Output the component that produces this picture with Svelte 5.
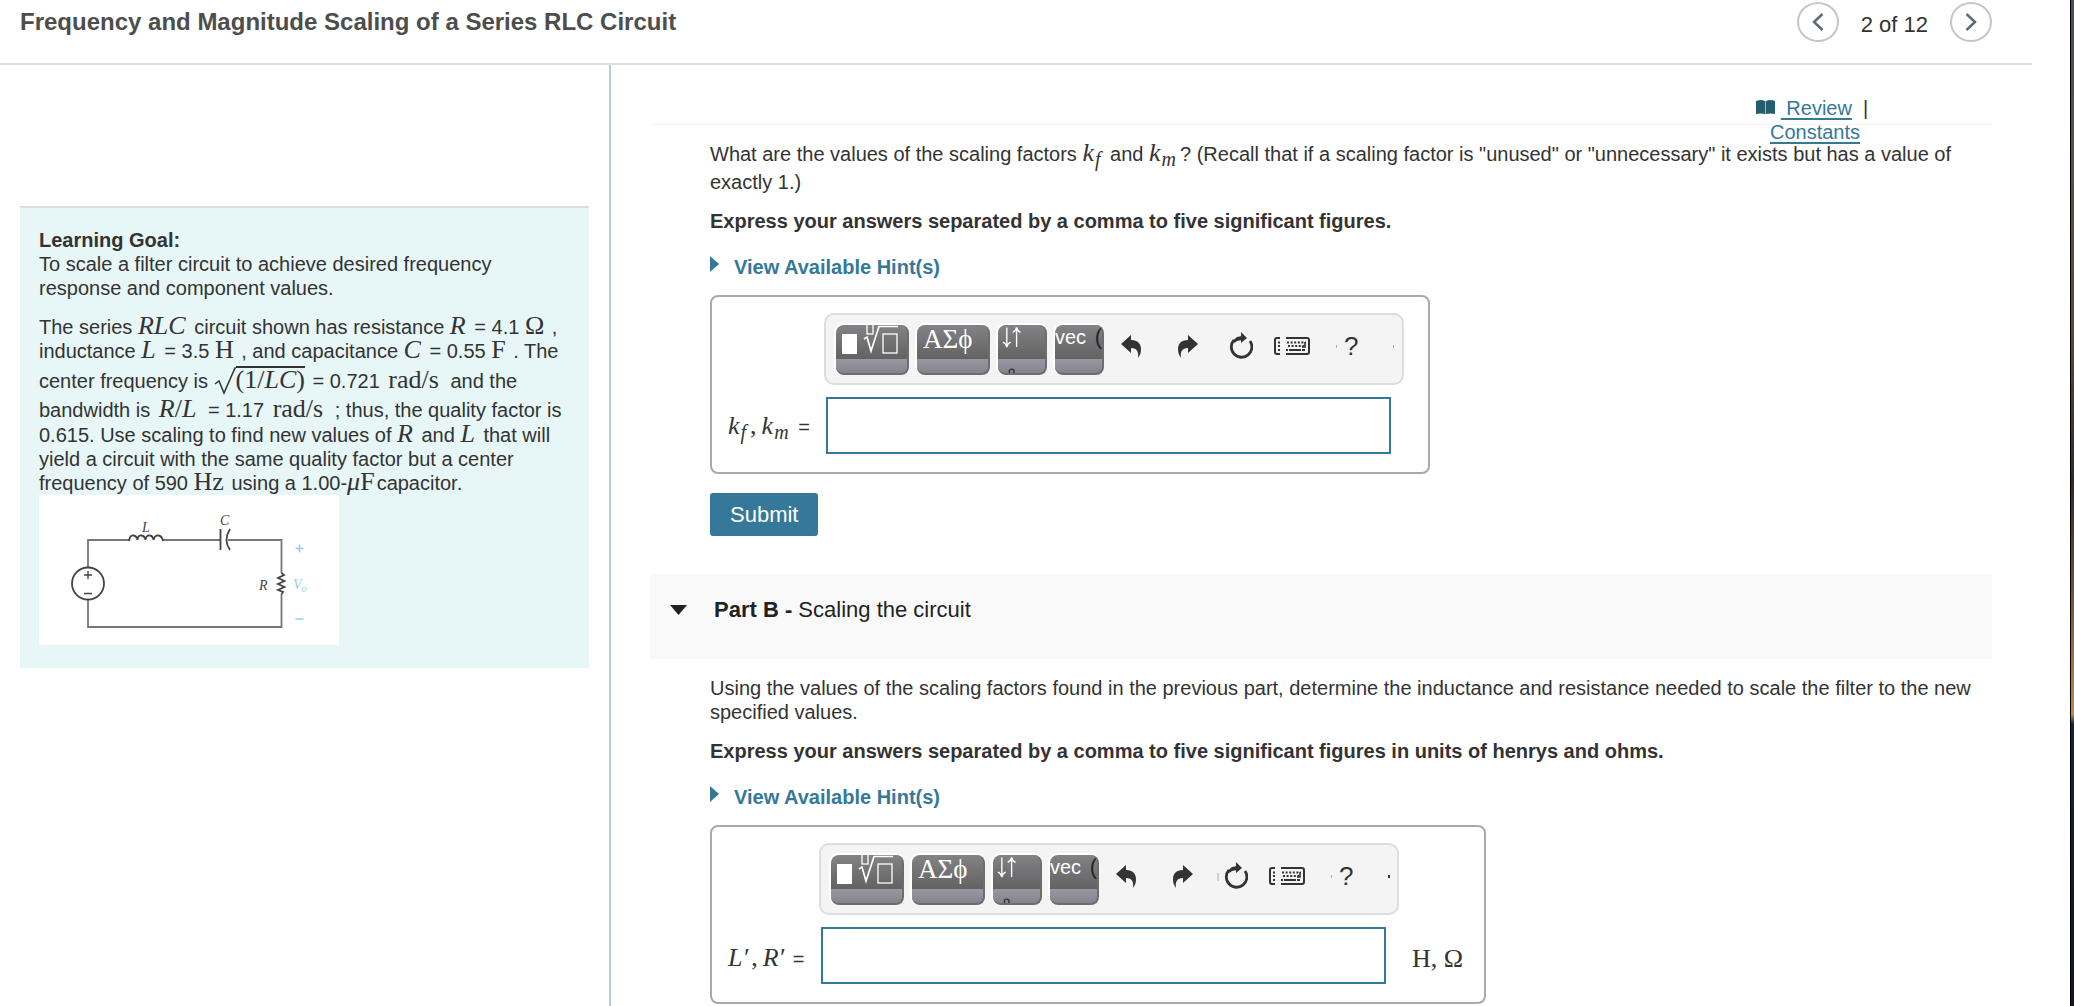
<script lang="ts">
	type Part = {
		id: string;
		unit: string;
		ticks: boolean;
	};

	const partA: Part = { id: 'part-a', unit: '', ticks: false };
	const partB: Part = { id: 'part-b', unit: 'H, Ω', ticks: true };

	let answers = $state<Record<string, string>>({ 'part-a': '', 'part-b': '' });
	let partBOpen = $state(true);
</script>

{#snippet hints()}
	<button type="button" class="hints">
		<svg width="10" height="18" viewBox="0 0 10 18" aria-hidden="true">
			<path d="M0 1 L9 9 L0 17 Z" fill="#357899" />
		</svg>
		View Available Hint(s)
	</button>
{/snippet}

{#snippet toolbar(ticks: boolean)}
	<div class="toolbar" role="toolbar" aria-label="Equation tools">
		<button type="button" class="tool wide" aria-label="Templates">
			<svg width="71" height="33" viewBox="0 0 71 33" fill="none" stroke="#fff">
				<rect x="6" y="9" width="15" height="20" fill="#fff" stroke="none" />
				<rect x="31" y="-4" width="6" height="13" stroke-width="1.3" />
				<path d="M28 14 L31 12 L35 26 L43 1.5 H62" stroke-width="1.7" />
				<rect x="47" y="9" width="14" height="19" stroke-width="1.3" />
			</svg>
		</button>
		<button type="button" class="tool wide greek">ΑΣϕ</button>
		<button type="button" class="tool narrow" aria-label="Arrows">
			<svg width="48" height="48" viewBox="0 0 48 48" fill="none" stroke="#fff" stroke-width="1.4">
				<path d="M9 2 V22 M5 17 Q8 18 9 22 Q10 18 13 17" />
				<path d="M19 22 V2 M15 7 Q18 6 19 2 Q20 6 23 7" />
				<circle cx="14" cy="47" r="2.5" stroke="#333" />
			</svg>
		</button>
		<button type="button" class="tool narrow vec">vec&nbsp;<span>(</span></button>
		<div class="actions">
			<button type="button" class="action" aria-label="Undo">
				<svg width="20" height="23" viewBox="0 0 20 23">
					<path d="M0 9 L10 0 V5 C17 5 20 9 20 14 C20 18 19 20 17 23 C18 17 16 13 10 13 V18 Z" fill="#333" />
				</svg>
			</button>
			<button type="button" class="action" aria-label="Redo">
				<svg width="20" height="23" viewBox="0 0 20 23">
					<path d="M20 9 L10 0 V5 C3 5 0 9 0 14 C0 18 1 20 3 23 C2 17 4 13 10 13 V18 Z" fill="#333" />
				</svg>
			</button>
			<button type="button" class="action reset" aria-label="Reset">
				<svg width="34" height="28" viewBox="-10 0 34 28">
					{#if ticks}<path d="M-6 11 V19" stroke="#aaa" />{/if}
					<path d="M5 8 A10.3 10.3 0 1 0 21 9" fill="none" stroke="#333" stroke-width="2.8" />
					<path d="M12 0 L18 6 L12 11 Z M4.500 8 L8 5 L13 4 V8 L8 9 L5.500 11 Z" fill="#333" />
				</svg>
			</button>
			<button type="button" class="action" aria-label="Keyboard shortcuts">
				<svg width="36" height="18" viewBox="0 0 36 18" fill="none" stroke="#333">
					<path d="M6 1 H3 Q1 1 1 3 V15 Q1 17 3 17 H6" stroke-width="2" />
					<path d="M12 1 H33 Q35 1 35 3 V15 Q35 17 33 17 H12" stroke-width="2" />
					<path d="M4 5.5 H6 M4 9 H6 M4 13 H6 M12 13 H14 M28 13 H31" stroke-width="2" />
					<path d="M13 5.5 H32 M14 9 H30" stroke-width="2" stroke-dasharray="2 1.6" />
					<path d="M15 13 H27" stroke-width="2" />
					<path d="M31 5 V10 H28" stroke-width="1.6" />
				</svg>
			</button>
			<button type="button" class="action help"><span class="tick"></span>?</button>
			<span class="tick" class:dark={ticks}></span>
		</div>
	</div>
{/snippet}

{#snippet answerBox(part: Part)}
	<div class="answer" class:with-unit={part.unit}>
		<div class="answer-grid">
			{@render toolbar(part.ticks)}
			<label for={part.id}>
				{#if part.id === 'part-a'}
					<i class="math">k<sub>f</sub></i><span class="math">,</span><i class="math">k<sub>m</sub></i>
				{:else}
					<i class="math">L′</i><span class="math">,</span><i class="math">R′</i>
				{/if}
				<span>=</span>
			</label>
			<input id={part.id} type="text" autocomplete="off" bind:value={answers[part.id]} />
			{#if part.unit}
				<span class="unit math">{part.unit}</span>
			{/if}
		</div>
	</div>
{/snippet}

<div class="window">
	<div class="page">
		<header>
			<h1>Frequency and Magnitude Scaling of a Series RLC Circuit</h1>
			<nav aria-label="Items">
				<button type="button" class="round" aria-label="Previous item">
					<svg width="12" height="18" viewBox="0 0 12 18"><path d="M10.5 1 L2 9 L10.5 17" /></svg>
				</button>
				<span>2 of 12</span>
				<button type="button" class="round" aria-label="Next item">
					<svg width="12" height="18" viewBox="0 0 12 18"><path d="M1.5 1 L10 9 L1.5 17" /></svg>
				</button>
			</nav>
		</header>

		<div class="columns">
			<aside>
				<section class="goal">
					<p>
						<strong>Learning Goal:</strong><br />
						To scale a filter circuit to achieve desired frequency response and component values.
					</p>
					<p>
						The series <i class="math">RLC</i> circuit shown has resistance <i class="math">R</i> = 4.1
						<span class="math">Ω</span> ,<br />
						inductance <i class="math">L</i> = 3.5 <span class="math">H</span> , and capacitance
						<i class="math">C</i> = 0.55 <span class="math">F</span> . The<br />
						center frequency is
						<span class="math tall"
							><svg width="22" height="28" viewBox="0 0 22 28" aria-hidden="true">
								<path d="M1 17 L5 14 L10 26 L21 1 H22" fill="none" stroke="#333" stroke-width="1.5" />
							</svg><span class="radicand">(1/<i>LC</i>)</span></span
						>
						= 0.721 <span class="math rate">rad/s</span> and the<br />
						bandwidth is <span class="math tall rate"><i>R</i>/<i>L</i></span> = 1.17
						<span class="math rate">rad/s</span> ; thus, the quality factor is<br />
						0.615. Use scaling to find new values of <i class="math">R</i> and <i class="math">L</i> that will<br />
						yield a circuit with the same quality factor but a center<br />
						frequency of 590 <span class="math">Hz</span> using a 1.00-<span class="math"><i>μ</i>F</span>capacitor.
					</p>
					<svg class="circuit" width="300" height="150" viewBox="0 0 300 150" role="img" aria-label="Series RLC circuit">
						<rect width="300" height="150" fill="#fff" />
						<g fill="none" stroke="#777" stroke-width="1.8">
							<path d="M49 73 V45 H90 M124 45 H181 M189 45 H242.500 V78" />
							<path d="M49 105 V132 H242.500 V99" />
						</g>
						<g fill="none" stroke="#444" stroke-width="1.8">
							<circle cx="49" cy="88.500" r="16" />
							<path d="M90 46 Q91 40 94.500 40.500 Q98 41 98.500 45 Q99 40 102.500 40.500 Q106 41 106.500 45 Q107 40 111 40.500 Q114 41 114.500 45 Q116 40 119.500 40.500 Q123 41 124 46" />
							<path d="M181.500 34 V55 M191 34 Q184 45 191 55" />
							<path d="M242.500 78 L245 80 L239 83 L245.500 86 L239 89 L245.500 92 L239 95 L244 97 L242.500 99" />
							<path d="M45 80 H53 M49 76 V84 M45 98.500 H53" stroke-width="1.4" />
						</g>
						<g class="circuit-text" fill="#444">
							<text x="103" y="37">L</text>
							<text x="181" y="30">C</text>
							<text x="220" y="95">R</text>
							<text x="254" y="94" fill="#8fd0e8">V<tspan font-size="10" dy="3">o</tspan></text>
						</g>
						<path d="M256.500 53.500 H264.500 M260.500 49.500 V57.500 M256.500 124 H264.500" fill="none" stroke="#8fd0e8" stroke-width="1.5" />
					</svg>
				</section>
			</aside>

			<main>
				<div class="review">
					<div class="review-links">
						<svg width="19" height="15" viewBox="0 0 19 15" aria-hidden="true">
							<path d="M0 1 Q5 -1 9 1 V14 Q5 13 0 14 Z M19 1 Q14 -1 10 1 V14 Q14 13 19 14 Z" fill="#265c70" />
							<path d="M9.500 1 V14" stroke="#9fbac4" />
						</svg>
						<a href="#review">&nbsp;Review</a>&nbsp; |&nbsp;<br />
						<a href="#constants">Constants</a>
					</div>
				</div>

				<section class="part">
					<p>
						What are the values of the scaling factors <i class="math">k<sub>f</sub></i> and
						<i class="math">k<sub>m</sub></i>? (Recall that if a scaling factor is "unused" or
						"unnecessary" it exists but has a value of exactly 1.)
					</p>
					<p><strong>Express your answers separated by a comma to five significant figures.</strong></p>
					{@render hints()}
					{@render answerBox(partA)}
					<button type="button" class="submit">Submit</button>
				</section>

				<h2>
					<button type="button" aria-expanded={partBOpen} onclick={() => (partBOpen = !partBOpen)}>
						<svg width="17" height="10" viewBox="0 0 17 10" aria-hidden="true">
							<path d="M0 0 H17 L8.500 10 Z" fill="#222" />
						</svg>
						<span><strong>Part B -</strong> Scaling the circuit</span>
					</button>
				</h2>

				{#if partBOpen}
					<section class="part">
						<p>
							Using the values of the scaling factors found in the previous part, determine the
							inductance and resistance needed to scale the filter to the new specified values.
						</p>
						<p>
							<strong>
								Express your answers separated by a comma to five significant figures in units of
								henrys and ohms.
							</strong>
						</p>
						{@render hints()}
						{@render answerBox(partB)}
					</section>
				{/if}
			</main>
		</div>
	</div>
	<!-- sliver of the desktop behind the window -->
	<div class="desktop"></div>
</div>

<style>
	:global(body) {
		margin: 0;
		background: #fff;
	}

	.window {
		display: flex;
		min-height: 100vh;
		font-family: 'Liberation Sans', Arial, sans-serif;
		font-size: 20px;
		line-height: 24px;
		color: #333;
	}

	.desktop {
		width: 3px;
		border-left: 1px solid #000;
		background: linear-gradient(
			#43505e,
			#5a5048 15%,
			#5c4836 33%,
			#2f2b28 48%,
			#6e4e32 58%,
			#bd8850 71%,
			#10243a 72%,
			#0c1826
		);
	}

	.page {
		flex: 1;
		display: flex;
		flex-direction: column;
	}

	button {
		font: inherit;
		color: inherit;
		border: none;
		background: none;
		padding: 0;
		cursor: pointer;
	}

	p {
		margin: 0;
	}

	/* zero line height keeps the larger serif from stretching its line */
	.math {
		padding-right: 2px;
		font-family: 'Liberation Serif', 'Times New Roman', serif;
		font-size: 26px;
		line-height: 0;
	}

	i.math {
		padding-right: 3px;
	}

	.math sub {
		padding: 0 1px;
		font-size: 20px;
		line-height: 22px;
		vertical-align: -5px;
	}

	/* header */

	header {
		display: flex;
		justify-content: space-between;
		align-items: flex-start;
		height: 63px;
		margin-right: 38px;
		padding-left: 20px;
		border-bottom: 2px solid #ddd;
	}

	h1 {
		margin: 8px 0 0;
		font-size: 24px;
		line-height: 28px;
		color: #4d4d4d;
	}

	nav {
		display: flex;
		align-items: center;
		gap: 22px;
		padding: 2px 40px 0 0;
		font-size: 22px;
	}

	nav span {
		padding-top: 6px;
	}

	.round {
		display: flex;
		align-items: center;
		justify-content: center;
		width: 42px;
		height: 40px;
		border: 2px solid #c6c6c6;
		border-radius: 50%;
		box-sizing: border-box;
	}

	.round path {
		fill: none;
		stroke: #5f6b70;
		stroke-width: 2.5;
	}

	.columns {
		flex: 1;
		display: flex;
	}

	/* left column */

	aside {
		flex: none;
		width: 611px;
		padding: 141px 20px 0;
		border-right: 2px solid #b8cadc;
		box-sizing: border-box;
	}

	.goal {
		padding: 20px 0 23px 19px;
		border-top: 2px solid #ddd;
		background: #e7f6f6;
	}

	.goal p:first-child {
		width: 500px;
		margin-bottom: 15px;
	}

	.tall {
		display: inline-block;
		padding-top: 3px;
		padding-bottom: 2px;
		line-height: 24px;
	}

	.rate {
		padding-left: 3px;
		padding-right: 6px;
	}

	.tall svg {
		margin: -8px 0 -7px;
	}

	.radicand {
		display: inline-block;
		border-top: 2px solid #333;
	}

	.circuit {
		display: block;
	}

	.circuit-text {
		font: italic 14px 'Liberation Serif', serif;
	}

	/* right column */

	main {
		flex: 1;
		min-width: 0;
		padding: 0 78px 0 39px;
	}

	.review {
		display: flex;
		justify-content: flex-end;
		height: 59px;
		border-bottom: 1px solid #f2f2f2;
	}

	.review-links {
		width: 130px;
		padding: 31px 112px 0 0;
		text-align: center;
	}

	.review a {
		color: #357899;
		text-underline-offset: 3px;
		text-decoration-thickness: 2px;
	}

	.part {
		padding: 17px 0 0 60px;
	}

	.part p {
		margin-bottom: 15px;
	}

	.hints {
		display: flex;
		gap: 14px;
		margin-top: 22px;
		color: #357899;
		font-weight: bold;
	}

	.answer {
		width: 720px;
		margin-top: 16px;
		padding: 16px 22px 18px 16px;
		border: 2px solid #aaa;
		border-radius: 8px;
		box-sizing: border-box;
	}

	.answer.with-unit {
		width: 776px;
	}

	.answer-grid {
		display: grid;
		grid-template-columns: 96px 580px;
		row-gap: 12px;
		align-items: center;
	}

	.with-unit .answer-grid {
		grid-template-columns: 91px 580px auto;
	}

	.toolbar {
		grid-column: 2;
		display: flex;
		gap: 8px;
		height: 72px;
		padding: 10px;
		border: 2px solid #ddd;
		border-radius: 10px;
		box-sizing: border-box;
		background: #f4f4f4;
	}

	.tool {
		flex: none;
		height: 50px;
		overflow: hidden;
		display: flex;
		align-items: flex-start;
		border: solid #6d6d6d;
		border-width: 0 2px 2px 0;
		border-radius: 8px;
		box-shadow: -1px -1px 0 1px #fff;
		background: linear-gradient(#838387, #626262 34px, #9a97a3 34px, #85838c);
		color: #fff;
	}

	.wide {
		width: 73px;
	}

	.narrow {
		width: 49px;
	}

	.greek {
		padding: 2px 0 0 6px;
		font: 27px/24px 'Liberation Serif', serif;
	}

	.vec span {
		margin-left: 3px;
		color: #222;
		font-size: 22px;
	}

	.actions {
		display: flex;
		align-items: center;
		height: 42px;
		padding-left: 9px;
	}

	.action {
		display: flex;
		align-items: center;
		margin-right: 37px;
	}

	.action.reset {
		margin: 0 21px 0 -16px;
	}

	.action.help {
		gap: 7px;
		margin: 0 35px 0 -11px;
		font-size: 26px;
	}

	.tick {
		width: 1px;
		height: 3px;
		background: #aaa;
	}

	.tick.dark {
		width: 2px;
		background: #333;
	}

	label {
		grid-column: 1;
		padding-top: 6px;
		white-space: nowrap;
	}

	label span.math {
		padding-right: 5px;
	}

	input {
		width: 565px;
		height: 57px;
		margin-left: 2px;
		padding: 0 10px;
		border: 2px solid #357899;
		box-sizing: border-box;
		background: #fff;
		font: inherit;
		outline: none;
	}

	.unit {
		margin-left: 13px;
		padding-top: 6px;
		white-space: nowrap;
		line-height: 24px;
	}

	.submit {
		height: 43px;
		margin-top: 19px;
		padding: 0 20px;
		border-radius: 3px;
		background: #357899;
		color: #fff;
		font-size: 22px;
	}

	h2 {
		height: 85px;
		margin: 38px 0 0;
		background: #f9f9f9;
		font-size: 22px;
		font-weight: normal;
		color: #222;
	}

	h2 button {
		display: flex;
		align-items: center;
		gap: 27px;
		padding: 24px 0 0 20px;
	}
</style>
